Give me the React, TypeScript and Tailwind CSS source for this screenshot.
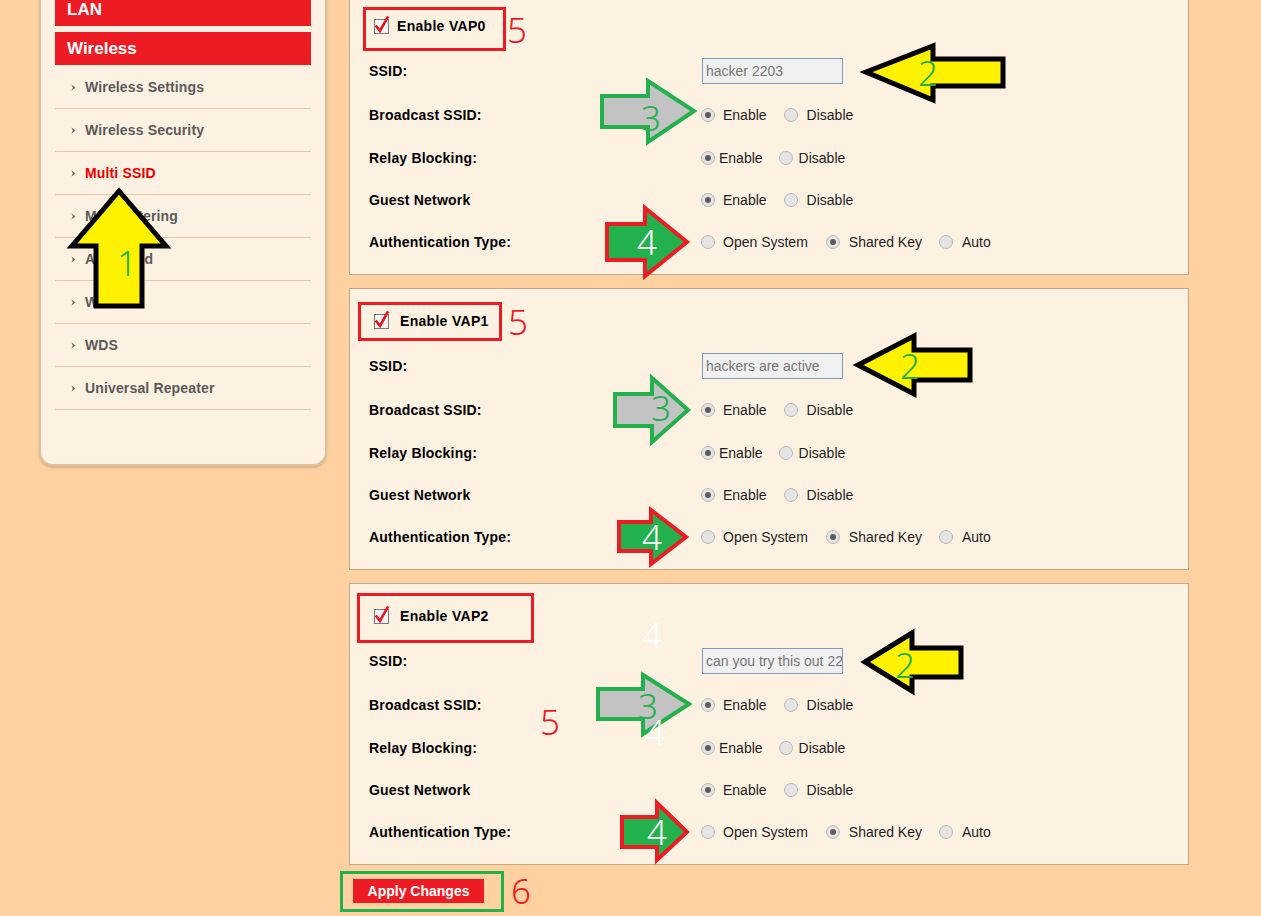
import React from "react";

const FONT = "font-['Liberation_Sans',Arial,sans-serif]";

function Bullet() {
  return (
    <svg width="5" height="7" viewBox="0 0 5 7" className="shrink-0">
      <path d="M0.5 0.5 L4.5 3.5 L0.5 6.5 L1.8 3.5 Z" fill="#6a6a6a" />
    </svg>
  );
}

function Radio({ checked }: { checked?: boolean }) {
  return (
    <span className="w-[14px] h-[14px] rounded-full border border-[#b8b8b8] bg-[#e4e4e4] flex items-center justify-center shrink-0">
      {checked ? <span className="w-[6px] h-[6px] rounded-full bg-[#5c5c5c]" /> : null}
    </span>
  );
}

function CheckBox() {
  return (
    <svg width="17" height="18" viewBox="0 0 17 18" className="shrink-0 -mt-[3px]">
      <rect x="1.5" y="3.5" width="14" height="14" fill="#f4f4f4" stroke="#7a7a7a" strokeWidth="1" />
      <path d="M3.5 10.5 L7 15 L14.5 1.5" fill="none" stroke="#e8141e" strokeWidth="2.6" strokeLinecap="square" />
    </svg>
  );
}

type Opt = { label: string; checked?: boolean; gap: number; ml: number };

function Options({ opts }: { opts: Opt[] }) {
  return (
    <div className="flex items-center text-[14px] text-[#1e1e1e]">
      {opts.map((o, i) => (
        <div key={i} className="flex items-center" style={{ marginLeft: i === 0 ? 0 : o.ml }}>
          <Radio checked={o.checked} />
          <span style={{ marginLeft: o.gap }}>{o.label}</span>
        </div>
      ))}
    </div>
  );
}

function Row({ label, h, children }: { label: string; h: string; children: React.ReactNode }) {
  return (
    <div className={"flex items-center pl-[19px] " + h}>
      <div className="w-[332px] text-[14px] font-bold text-black tracking-[0.2px]">{label}</div>
      <div className="flex items-center">{children}</div>
    </div>
  );
}

function Panel({ name, ssid, labelGap }: { name: string; ssid: string; labelGap: number }) {
  return (
    <div className="border border-[#c4a688] bg-[#fdf1e2] pt-[11px] pb-[11px]">
      <div className="flex items-center h-[42px] pl-[23px]">
        <CheckBox />
        <span className="text-[14px] font-bold text-black tracking-[0.3px]" style={{ marginLeft: labelGap }}>
          {name}
        </span>
      </div>
      <div className="mt-[2px]">
        <Row label="SSID:" h="h-[44px]">
          <div className="ml-[1px] w-[141px] h-[26px] border border-[#7f9db9] bg-[#f0f0f0] text-[14px] text-[#777] pl-[3px] flex items-center overflow-hidden whitespace-nowrap">
            {ssid}
          </div>
        </Row>
        <Row label="Broadcast SSID:" h="h-[44px]">
          <Options
            opts={[
              { label: "Enable", checked: true, gap: 8, ml: 0 },
              { label: "Disable", gap: 9, ml: 17 },
            ]}
          />
        </Row>
        <Row label="Relay Blocking:" h="h-[42px]">
          <Options
            opts={[
              { label: "Enable", checked: true, gap: 4, ml: 0 },
              { label: "Disable", gap: 6, ml: 16 },
            ]}
          />
        </Row>
        <Row label="Guest Network" h="h-[42px]">
          <Options
            opts={[
              { label: "Enable", checked: true, gap: 8, ml: 0 },
              { label: "Disable", gap: 9, ml: 17 },
            ]}
          />
        </Row>
        <Row label="Authentication Type:" h="h-[42px]">
          <Options
            opts={[
              { label: "Open System", gap: 8, ml: 0 },
              { label: "Shared Key", checked: true, gap: 9, ml: 18 },
              { label: "Auto", gap: 9, ml: 17 },
            ]}
          />
        </Row>
      </div>
    </div>
  );
}

const menu = [
  "Wireless Settings",
  "Wireless Security",
  "Multi SSID",
  "MAC Filtering",
  "Advanced",
  "WPS",
  "WDS",
  "Universal Repeater",
];

function Sidebar() {
  return (
    <div className="w-[288px] shrink-0 bg-[#fdf1e2] border-2 border-t-0 border-[#dcc19c] rounded-b-[14px] px-[14px] pb-[54px] shadow-[0_2px_2px_rgba(160,120,80,0.35)]">
      <div className="h-[33px] bg-[#ed1c24] text-white font-bold text-[17px] pl-[12px] flex items-center">LAN</div>
      <div className="h-[33px] mt-[6px] bg-[#ed1c24] text-white font-bold text-[17px] pl-[12px] flex items-center">
        Wireless
      </div>
      <div className="mt-[1px]">
        {menu.map((m) => (
          <div key={m} className="h-[43px] border-b border-[#e0c9aa] flex items-center pl-[16px]">
            <Bullet />
            <span
              className={
                "ml-[9px] text-[14px] font-bold tracking-[0.15px] " +
                (m === "Multi SSID" ? "text-[#f00000]" : "text-[#5a5a5a]")
              }
            >
              {m}
            </span>
          </div>
        ))}
      </div>
    </div>
  );
}

function Overlay() {
  const digit = {
    fontFamily: "'Noto Sans', 'DejaVu Sans', sans-serif",
    fontWeight: 300,
    fontSize: 35,
  } as const;
  const T = ({ x, y, c, t }: { x: number; y: number; c: string; t: string }) => (
    <text x={x} y={y} fill={c} textAnchor="middle" dominantBaseline="central" style={digit}>
      {t}
    </text>
  );
  const left = (tip: number, cy: number, hx: number, ht: number, hb: number, st: number, sb: number, r: number) =>
    `${tip},${cy} ${hx},${ht} ${hx},${st} ${r},${st} ${r},${sb} ${hx},${sb} ${hx},${hb}`;
  const right = (l: number, st: number, sb: number, hx: number, ht: number, hb: number, tip: number, cy: number) =>
    `${l},${st} ${hx},${st} ${hx},${ht} ${tip},${cy} ${hx},${hb} ${hx},${sb} ${l},${sb}`;
  return (
    <svg className="absolute left-0 top-0 pointer-events-none" width="1261" height="916" viewBox="0 0 1261 916">
      {/* arrow 1 up */}
      <polygon
        points="119,191 166,246 142,246 142,306 96,306 96,246 72,246"
        fill="#fff200"
        stroke="#000"
        strokeWidth="5"
        strokeLinejoin="miter"
      />
      <T x={127} y={262} c="#22b14c" t="1" />

      {/* yellow left arrows */}
      <polygon points={left(866, 72, 933, 46, 100, 59, 86, 1003)} fill="#fff200" stroke="#000" strokeWidth="5" />
      <T x={928} y={72} c="#22b14c" t="2" />
      <polygon points={left(858, 365, 914, 336, 394, 350, 380, 970)} fill="#fff200" stroke="#000" strokeWidth="5" />
      <T x={910} y={365} c="#22b14c" t="2" />
      <polygon points={left(865, 662, 912, 633, 691, 648, 677, 961)} fill="#fff200" stroke="#000" strokeWidth="5" />
      <T x={905} y={664} c="#22b14c" t="2" />

      {/* gray right arrows */}
      <polygon points={right(602, 96, 127, 648, 81, 142, 694, 111)} fill="#c3c3c3" stroke="#22b14c" strokeWidth="4" />
      <T x={651} y={117} c="#22b14c" t="3" />
      <polygon points={right(615, 394, 426, 652, 378, 442, 688, 410)} fill="#c3c3c3" stroke="#22b14c" strokeWidth="4" />
      <T x={661} y={407} c="#22b14c" t="3" />
      <polygon points={right(598, 689, 719, 643, 675, 734, 689, 704)} fill="#c3c3c3" stroke="#22b14c" strokeWidth="4" />
      <T x={648} y={705} c="#22b14c" t="3" />

      {/* green right arrows */}
      <polygon points={right(607, 224, 260, 645, 208, 276, 687, 242)} fill="#22b14c" stroke="#ed1c24" strokeWidth="4" />
      <T x={647} y={241} c="#ffffff" t="4" />
      <polygon points={right(619, 522, 551, 651, 510, 564, 686, 537)} fill="#22b14c" stroke="#ed1c24" strokeWidth="4" />
      <T x={652} y={536} c="#ffffff" t="4" />
      <polygon points={right(622, 817, 847, 657, 803, 860, 687, 832)} fill="#22b14c" stroke="#ed1c24" strokeWidth="4" />
      <T x={657} y={831} c="#ffffff" t="4" />

      {/* stray white 4s */}
      <T x={652} y={634} c="#ffffff" t="4" />
      <T x={655} y={731} c="#ffffff" t="4" />

      {/* red boxes */}
      <rect x="364.5" y="8.5" width="140" height="41" fill="none" stroke="#ed1c24" strokeWidth="3" />
      <rect x="359.5" y="303.5" width="141" height="36" fill="none" stroke="#ed1c24" strokeWidth="3" />
      <rect x="358.5" y="594.5" width="174" height="47" fill="none" stroke="#ed1c24" strokeWidth="3" />
      <T x={517} y={29} c="#ed1c24" t="5" />
      <T x={518} y={321} c="#ed1c24" t="5" />
      <T x={550} y={721} c="#ed1c24" t="5" />

      {/* green box around apply */}
      <rect x="341.5" y="872.5" width="161" height="38" fill="none" stroke="#22b14c" strokeWidth="3" />
      <T x={521} y={890} c="#ed1c24" t="6" />
    </svg>
  );
}

export default function App() {
  return (
    <div className={"relative w-[1261px] h-[916px] overflow-hidden bg-[#fdd1a0] " + FONT}>
      <div className="flex items-start pl-[39px] -mt-[7px]">
        <Sidebar />
        <div className="ml-[22px] w-[840px] flex flex-col">
          <Panel name="Enable VAP0" ssid="hacker 2203" labelGap={7} />
          <div className="mt-[13px]">
            <Panel name="Enable VAP1" ssid="hackers are active" labelGap={10} />
          </div>
          <div className="mt-[13px]">
            <Panel name="Enable VAP2" ssid="can you try this out 2203" labelGap={10} />
          </div>
          <div className="mt-[14px] ml-[4px]">
            <button className="w-[131px] h-[24px] bg-[#ed1c24] text-white font-bold text-[14px] flex items-center justify-center">
              Apply Changes
            </button>
          </div>
        </div>
      </div>
      <Overlay />
    </div>
  );
}
